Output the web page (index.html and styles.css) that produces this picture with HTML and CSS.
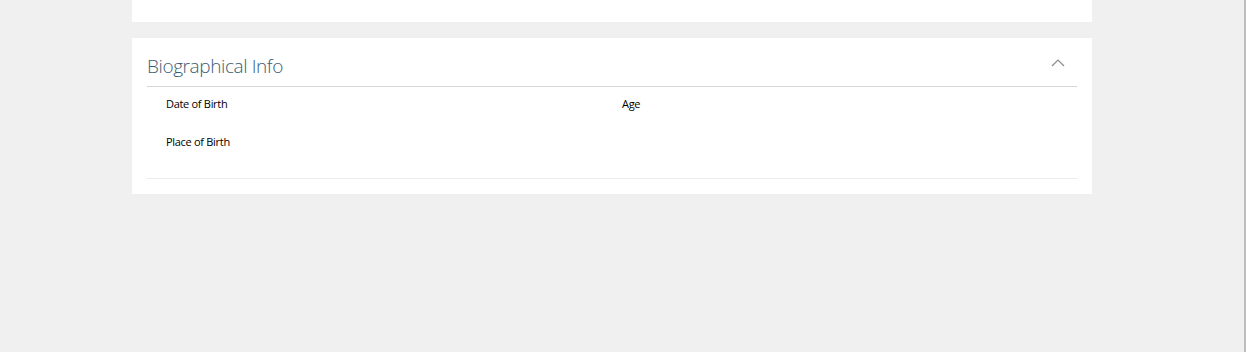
FILE: index.html
```html
<!DOCTYPE html>
<html lang="en">
<head>
    <meta charset="UTF-8">
    <title>Biographical Info</title>
    <link rel="stylesheet" href="styles.css">
</head>
<body>
    <div class="page">
        <div class="card card-top"></div>

        <div class="card section">
            <div class="section-header">
                <h2 class="section-title">Biographical Info</h2>
                <button class="toggle" aria-label="Collapse">
                    <svg width="14" height="8" viewBox="0 0 14 8">
                        <path d="M1 7 L7 1 L13 7" fill="none" stroke="#8a8a8a" stroke-width="1.2"/>
                    </svg>
                </button>
            </div>
            <div class="fields">
                <div class="field">Date of Birth</div>
                <div class="field">Age</div>
                <div class="field">Place of Birth</div>
                <div class="field"></div>
            </div>
        </div>
    </div>
</body>
</html>
```

FILE: styles.css
```css
html, body {
    margin: 0;
    padding: 0;
}

body {
    font-family: "Open Sans", "Noto Sans", sans-serif;
    background-color: #f0f0f0;
    color: #000;
}

.page {
    box-sizing: border-box;
    min-height: 100vh;
    border-right: 2px solid #bdbdbd;
    padding-left: 132px;
}

.card {
    width: 960px;
    background-color: #fff;
    box-sizing: border-box;
}

.card-top {
    height: 22px;
    margin-bottom: 16px;
}

.section {
    padding: 14px 15px 15px;
}

.section-header {
    display: flex;
    align-items: center;
    justify-content: space-between;
    padding-bottom: 6px;
    border-bottom: 1px solid #d6d6d6;
}

.section-title {
    margin: 0;
    font-size: 19px;
    font-weight: 300;
    letter-spacing: -0.4px;
    line-height: 28px;
    color: #3a5d73;
}

.toggle {
    background: none;
    border: none;
    padding: 0;
    margin-right: 12px;
    margin-top: -6px;
    cursor: pointer;
    display: flex;
}

.fields {
    display: grid;
    grid-template-columns: 456px 1fr;
    padding: 8px 0 7px 19px;
    border-bottom: 1px solid #ececec;
}

.field {
    font-size: 11px;
    letter-spacing: -0.3px;
    line-height: 18px;
    height: 38px;
}
```
